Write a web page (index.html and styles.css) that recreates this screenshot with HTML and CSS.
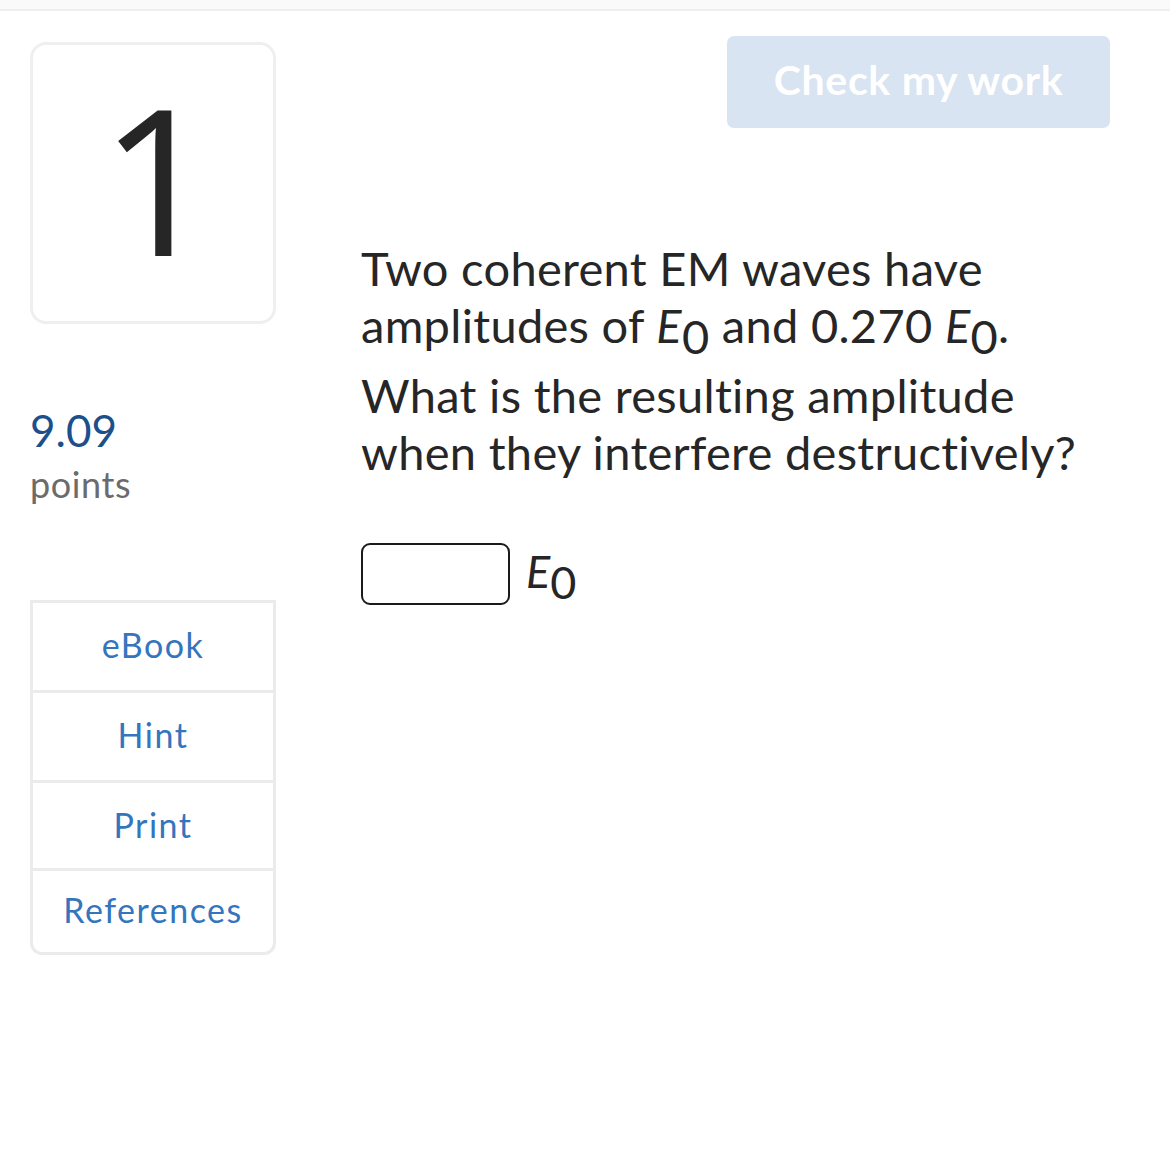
FILE: index.html
```html
<!DOCTYPE html>
<html>
<head>
<meta charset="utf-8">
<link rel="stylesheet" href="styles.css">
</head>
<body>
<div class="topbar"></div>
<div class="page">
  <aside class="side">
    <div class="qnum">1</div>
    <div class="points">
      <div class="pval">9.09</div>
      <div class="plabel">points</div>
    </div>
    <nav class="links">
      <div class="link l1">eBook</div>
      <div class="link l2">Hint</div>
      <div class="link l3">Print</div>
      <div class="link l4">References</div>
    </nav>
  </aside>
  <main class="main">
    <div class="btnrow"><button class="check">Check my work</button></div>
    <div class="question">
      <p>Two coherent EM waves have amplitudes of <span class="var">E</span><span class="sub">0</span> and 0.270 <span class="var">E</span><span class="sub">0</span>.</p>
      <p>What is the resulting amplitude when they interfere destructively?</p>
    </div>
    <div class="answer">
      <div class="input"></div>
      <span class="unit"><span class="var">E</span><span class="sub">0</span></span>
    </div>
  </main>
</div>
</body>
</html>
```

FILE: styles.css
```css
* { box-sizing: border-box; }
html, body { margin: 0; padding: 0; background: #fff; }
body {
  font-family: Lato, "Open Sans", sans-serif;
  color: #262626;
  font-variant-ligatures: none;
}

.topbar {
  height: 11px;
  background: #fafafa;
  border-bottom: 2px solid #efefef;
}

.page {
  display: flex;
  padding: 0 60px 0 30px;
}

.side {
  width: 246px;
  flex: none;
  display: flex;
  flex-direction: column;
}

.qnum {
  margin-top: 31px;
  height: 282px;
  border: 3px solid #efefef;
  border-radius: 16px;
  display: flex;
  align-items: center;
  justify-content: center;
  font-family: "Open Sans", sans-serif;
  font-size: 204px;
  line-height: 1;
  color: #262626;
  padding: 0 0 12px 10px;
}

.points {
  margin-top: 82px;
}
.pval {
  font-size: 44px;
  line-height: 48px;
  color: #1d4f8c;
}
.plabel {
  font-size: 36px;
  line-height: 48px;
  letter-spacing: 0.6px;
  color: #6b6b6b;
  margin-top: 6px;
}

.links {
  margin-top: 92px;
  border: 3px solid #ebebeb;
  border-radius: 0 0 12px 12px;
  display: flex;
  flex-direction: column;
}
.link {
  display: flex;
  align-items: center;
  justify-content: center;
  font-size: 34px;
  letter-spacing: 1.5px;
  color: #3475bd;
  border-top: 3px solid #ebebeb;
  padding-bottom: 4px;
}
.link.l1 { border-top: none; height: 87px; }
.link.l2 { height: 90px; }
.link.l3 { height: 88px; padding-bottom: 2px; }
.link.l4 { height: 84px; }

.main {
  flex: 1;
  margin-left: 85px;
}

.btnrow {
  display: flex;
  justify-content: flex-end;
  margin-top: 25px;
}
.check {
  width: 383px;
  height: 92px;
  border: none;
  border-radius: 7px;
  background: #d8e4f1;
  color: #fff;
  font-family: Lato, sans-serif;
  font-weight: 700;
  font-size: 41px;
  letter-spacing: 0.7px;
  padding: 0 0 6px 0;
}

.question {
  margin-top: 112px;
  font-size: 47px;
  line-height: 57px;
  letter-spacing: 0.3px;
  color: #262626;
}
.question p { margin: 0 0 13px 0; }

.var { font-style: italic; }
.sub {
  line-height: 0;
  vertical-align: -0.24em;
}

.answer {
  margin-top: 62px;
  display: flex;
  align-items: center;
  gap: 16px;
}
.input {
  width: 149px;
  height: 62px;
  border: 2.5px solid #1a1a1a;
  border-radius: 9px;
}
.unit {
  font-size: 45px;
  line-height: 1;
  margin-top: -6px;
}
```
